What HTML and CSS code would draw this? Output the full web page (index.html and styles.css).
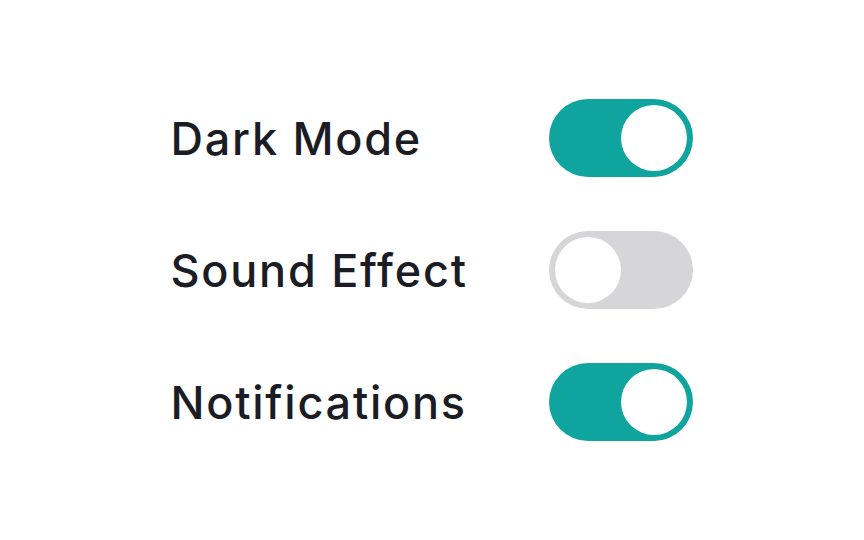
FILE: index.html
```html
<!DOCTYPE html>
<html>
<head>
<meta charset="utf-8">
<link rel="stylesheet" href="styles.css">
</head>
<body>
<div class="page">
  <div class="settings">
    <div class="label">Dark Mode</div>
    <div class="toggle on"><span class="knob"></span></div>
    <div class="label">Sound Effect</div>
    <div class="toggle"><span class="knob"></span></div>
    <div class="label">Notifications</div>
    <div class="toggle on"><span class="knob"></span></div>
  </div>
</div>
</body>
</html>
```

FILE: styles.css
```css
html, body {
  margin: 0;
  padding: 0;
  background: #ffffff;
}
.page {
  width: 864px;
  height: 540px;
  display: flex;
  align-items: center;
  justify-content: center;
}
.settings {
  display: grid;
  grid-template-columns: 376px 144px;
  row-gap: 54px;
  align-items: center;
  margin-left: 1px;
}
.label {
  font-family: "Inter", "Liberation Sans", sans-serif;
  font-size: 45px;
  font-weight: 500;
  color: #1c1c24;
  line-height: 1;
  letter-spacing: 1.75px;
  margin-left: -2px;
}
.toggle {
  width: 144px;
  height: 78px;
  border-radius: 39px;
  background: #d6d6d9;
  box-sizing: border-box;
  padding: 6px;
  display: flex;
  justify-content: flex-start;
}
.toggle.on {
  background: #0fa49e;
  justify-content: flex-end;
}
.knob {
  width: 66px;
  height: 66px;
  border-radius: 50%;
  background: #ffffff;
}
```
